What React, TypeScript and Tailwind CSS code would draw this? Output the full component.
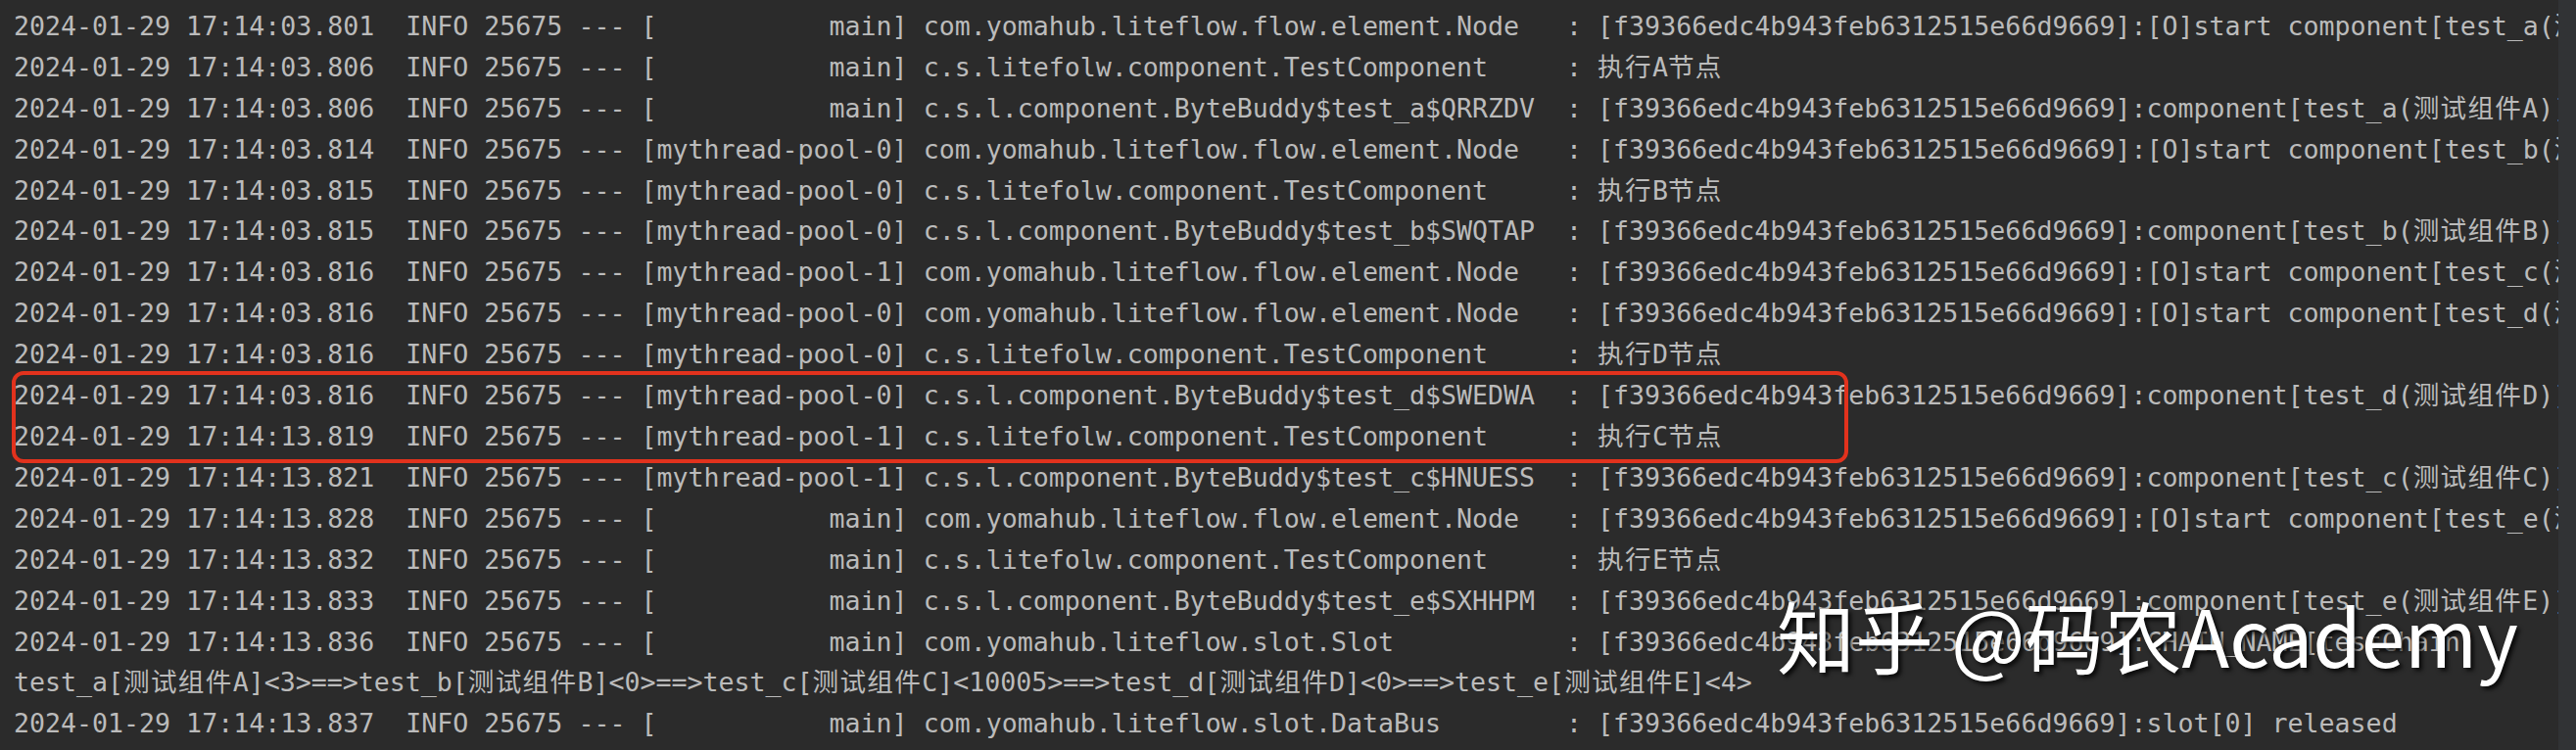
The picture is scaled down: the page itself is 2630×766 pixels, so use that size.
import React from "react";

const RID = "f39366edc4b943feb6312515e66d9669";

const row = (time: string, thread: string, logger: string, msg: string) =>
  `2024-01-29 ${time}  INFO 25675 --- [${thread.padStart(15)}] ${logger.padEnd(40)} : ${msg}`;

const NODE = "com.yomahub.liteflow.flow.element.Node";
const TEST = "c.s.litefolw.component.TestComponent";

const start = (id: string, name: string) =>
  `[${RID}]:[O]start component[${id}(${name})] execution`;
const done = (id: string, name: string, ms: number) =>
  `[${RID}]:component[${id}(${name})] finished in ${ms} milliseconds`;

const lines: string[] = [
  row("17:14:03.798", "main", "com.yomahub.liteflow.slot.DataBus", `[${RID}]:slot[0] offered`),
  row("17:14:03.801", "main", NODE, start("test_a", "测试组件A")),
  row("17:14:03.806", "main", TEST, "执行A节点"),
  row("17:14:03.806", "main", "c.s.l.component.ByteBuddy$test_a$QRRZDV", done("test_a", "测试组件A", 3)),
  row("17:14:03.814", "mythread-pool-0", NODE, start("test_b", "测试组件B")),
  row("17:14:03.815", "mythread-pool-0", TEST, "执行B节点"),
  row("17:14:03.815", "mythread-pool-0", "c.s.l.component.ByteBuddy$test_b$SWQTAP", done("test_b", "测试组件B", 0)),
  row("17:14:03.816", "mythread-pool-1", NODE, start("test_c", "测试组件C")),
  row("17:14:03.816", "mythread-pool-0", NODE, start("test_d", "测试组件D")),
  row("17:14:03.816", "mythread-pool-0", TEST, "执行D节点"),
  row("17:14:03.816", "mythread-pool-0", "c.s.l.component.ByteBuddy$test_d$SWEDWA", done("test_d", "测试组件D", 0)),
  row("17:14:13.819", "mythread-pool-1", TEST, "执行C节点"),
  row("17:14:13.821", "mythread-pool-1", "c.s.l.component.ByteBuddy$test_c$HNUESS", done("test_c", "测试组件C", 10005)),
  row("17:14:13.828", "main", NODE, start("test_e", "测试组件E")),
  row("17:14:13.832", "main", TEST, "执行E节点"),
  row("17:14:13.833", "main", "c.s.l.component.ByteBuddy$test_e$SXHHPM", done("test_e", "测试组件E", 4)),
  row("17:14:13.836", "main", "com.yomahub.liteflow.slot.Slot", `[${RID}]:CHAIN_NAME[testChain]`),
  "test_a[测试组件A]<3>==>test_b[测试组件B]<0>==>test_c[测试组件C]<10005>==>test_d[测试组件D]<0>==>test_e[测试组件E]<4>",
  row("17:14:13.837", "main", "com.yomahub.liteflow.slot.DataBus", `[${RID}]:slot[0] released`),
];

// CJK runs get a touch of extra spacing so they sit as wide as in the console
const LogLine: React.FC<{ text: string }> = ({ text }) => (
  <div>
    {text.split(/([\u4e00-\u9fff]+)/).map((part, i) =>
      /[\u4e00-\u9fff]/.test(part) ? (
        <span key={i} className="tracking-[1.3px]">
          {part}
        </span>
      ) : (
        part
      )
    )}
  </div>
);

export default function App() {
  return (
    <div className="relative h-[766px] w-[2630px] overflow-hidden bg-[#2b2b2b]">
      <div className="flex h-full">
        <div className="min-w-0 flex-1 overflow-hidden pl-[14px]">
          <div className="-mt-[36px] whitespace-pre font-['DejaVu_Sans_Mono','Noto_Sans_CJK_SC',monospace] text-[26.6px] leading-[41.9px] text-[#bbbbbb]">
            {lines.map((l, i) => (
              <LogLine key={i} text={l} />
            ))}
          </div>
        </div>
        <div className="w-[18px] bg-[#313335]" />
      </div>

      {/* highlight box */}
      <div className="absolute left-[12px] top-[379px] h-[94px] w-[1875px] rounded-[12px] border-[4px] border-[#e2321d]" />

      {/* watermark */}
      <div className="absolute left-[1814px] top-[607px] whitespace-pre font-['Noto_Sans_CJK_SC',sans-serif] text-[80px] leading-none text-white [text-shadow:3px_3px_4px_rgba(0,0,0,0.8)]">
        知乎 @码农Academy
      </div>
    </div>
  );
}
